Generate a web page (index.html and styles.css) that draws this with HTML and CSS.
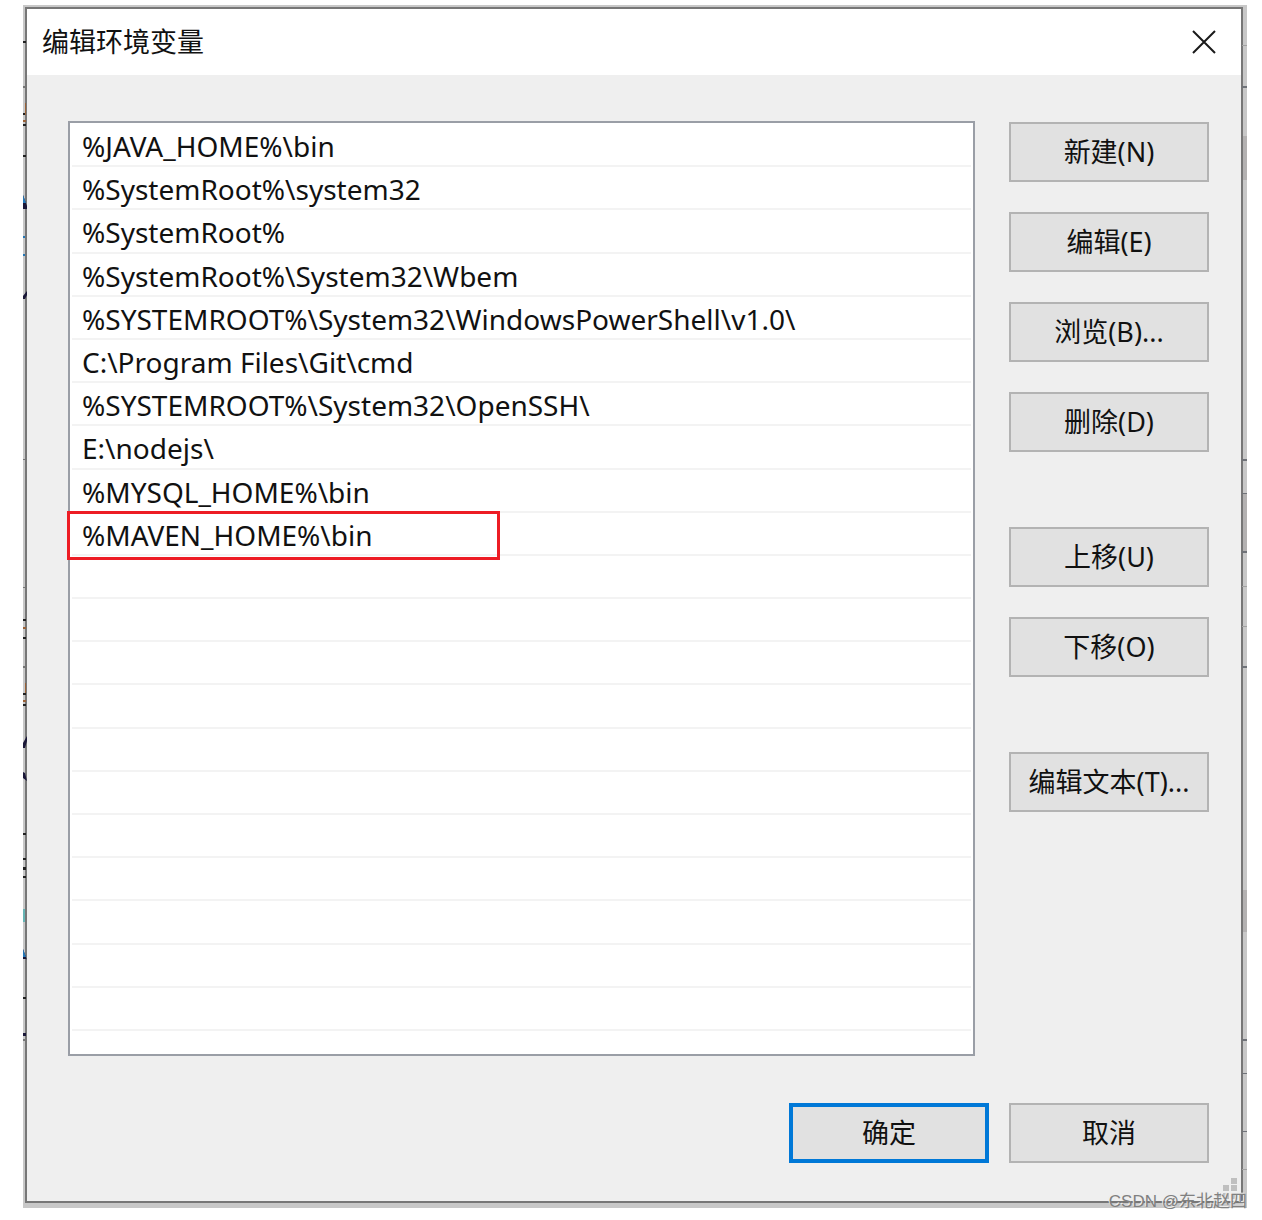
FILE: index.html
```html
<!DOCTYPE html>
<html lang="zh-CN">
<head>
<meta charset="utf-8">
<meta name="viewport" content="width=device-width, initial-scale=1">
<title>编辑环境变量</title>
<link rel="stylesheet" href="styles.css">
</head>
<body>
<div class="backdrop">
  <main class="dialog" aria-labelledby="dialog-title">
    <header class="titlebar">
      <h1 class="title" id="dialog-title">编辑环境变量</h1>
      <button class="close" type="button" aria-label="关闭">
        <svg width="24" height="24" viewBox="0 0 24 24" fill="none" stroke="#1a1a1a" stroke-width="2" aria-hidden="true"><path d="M1 1 23 23M23 1 1 23"/></svg>
      </button>
    </header>
    <div class="content">
      <ul class="paths">
        <li>%JAVA_HOME%\bin</li>
        <li>%SystemRoot%\system32</li>
        <li>%SystemRoot%</li>
        <li>%SystemRoot%\System32\Wbem</li>
        <li>%SYSTEMROOT%\System32\WindowsPowerShell\v1.0\</li>
        <li>C:\Program Files\Git\cmd</li>
        <li>%SYSTEMROOT%\System32\OpenSSH\</li>
        <li>E:\nodejs\</li>
        <li>%MYSQL_HOME%\bin</li>
        <li class="marked">%MAVEN_HOME%\bin</li>
        <li></li><li></li><li></li><li></li><li></li><li></li>
        <li></li><li></li><li></li><li></li><li></li>
      </ul>
      <div class="actions">
        <div class="group">
          <button class="btn" type="button">新建(N)</button>
          <button class="btn" type="button">编辑(E)</button>
          <button class="btn" type="button">浏览(B)...</button>
          <button class="btn" type="button">删除(D)</button>
        </div>
        <div class="group">
          <button class="btn" type="button">上移(U)</button>
          <button class="btn" type="button">下移(O)</button>
        </div>
        <div class="group">
          <button class="btn" type="button">编辑文本(T)...</button>
        </div>
      </div>
    </div>
    <footer class="footer">
      <button class="btn primary" type="button">确定</button>
      <button class="btn" type="button">取消</button>
    </footer>
    <svg class="grip" width="21" height="21" viewBox="0 0 21 21" fill="#bfbfbf" aria-hidden="true"><path d="M15 0h6v6h-6zM7 7h6v6H7zM15 7h6v6h-6zM0 15h5v6H0zM7 15h6v6H7zM15 15h6v6h-6z"/></svg>
  </main>
  <svg class="edge left" width="4" height="1203" viewBox="0 0 4 1203" aria-hidden="true">
    <g fill="#222"><path d="M0 36h3v2H0zM0 108h3v2H0zM0 119h3v2H0zM0 150h3v2H0zM0 614h3v2H0zM0 632h3v2H0zM0 688h3v2H0zM0 699h3v2H0zM0 828h3v2H0zM0 853h3v2H0zM0 862h3v3H0zM0 871h3v2H0zM0 992h3v2H0z"/></g>
    <g fill="#777"><path d="M0 81h3v2H0zM0 454h3v1H0zM0 582h3v1H0zM0 661h3v2H0zM0 1034h3v2H0z"/></g>
    <g fill="#9a6238"><path d="M2 98h1v12H2zM0 115h3v2H0zM0 622h3v2H0zM2 678h1v10H2zM0 695h3v2H0z"/></g>
    <g fill="#1a1738"><path d="M0 190l4 11v3H0zM0 291l4-5v4l-2 4H0zM0 738l4-7v5l-2 7H0zM0 767l2 1 2 8-4-3zM0 944l4 11v-1H0zM0 1028h3v3H0z"/></g>
    <g fill="#2478b8"><path d="M0 190l3 8H0zM0 231h2v2H0zM0 249h2v2H0zM0 944l3 8H0z"/></g>
    <path d="M0 904h2v13H0z" fill="#67b5b5"/>
  </svg>
  <svg class="edge right" width="5" height="1203" viewBox="0 0 5 1203" aria-hidden="true">
    <path d="M1 131h4v44H1zM1 488h4v58H1zM1 885h4v42H1z" fill="#b4b2b2"/>
    <path d="M0 40h5v1H0zM0 581h5v1H0zM0 621h5v1H0zM0 1164h5v1H0z" fill="#a2a2a2"/>
    <path d="M0 81h5v2H0zM0 454h5v2H0zM0 488h5v1H0zM0 546h5v2H0zM0 661h5v2H0zM0 1034h5v2H0zM0 1068h5v1H0zM0 1126h5v1H0z" fill="#6f7278"/>
  </svg>
  <span class="watermark">CSDN @东北赵四</span>
</div>
</body>
</html>
```
FILE: styles.css
```css
* {
  box-sizing: border-box;
}

body {
  margin: 0;
  min-height: 100vh;
  padding: 5px 15px 12px 23px;
  display: flex;
  background: #fff;
  color: #111;
  font: 28px/36px "Noto Sans", "Noto Sans CJK SC", sans-serif;
}

.backdrop {
  position: relative;
  flex: 1;
  display: flex;
  padding: 2px 4px 5px 2px;
  background: #c8c8c8;
}

.dialog {
  position: relative;
  flex: 1;
  display: flex;
  flex-direction: column;
  border: 2px solid #777;
  background: #efefef;
}

.titlebar {
  display: flex;
  align-items: center;
  justify-content: space-between;
  height: 66px;
  padding: 0 25px 0 15px;
  background: #fff;
}

.title {
  margin: 0;
  font-size: 27px;
  font-weight: 400;
}

.close {
  display: flex;
  padding: 0;
  border: 0;
  background: none;
}

.content {
  flex: 1;
  display: grid;
  grid-template-columns: 1fr 200px;
  gap: 34px;
  padding: 46px 32px 47px 41px;
}

.paths {
  display: grid;
  grid-auto-rows: 1fr;
  margin: 0;
  padding: 1px 2px 23px;
  border: 2px solid #9a9ea6;
  background: #fff;
  list-style: none;
}

.paths li {
  padding: 4px 10px 0;
  border-bottom: 2px solid #f3f3f3;
}

.marked {
  position: relative;
}

.marked::after {
  content: "";
  position: absolute;
  inset: -2px auto -6px -5px;
  width: 427px;
  border: 3px solid #ed1c24;
}

.actions {
  display: flex;
  flex-direction: column;
  gap: 75px;
  padding-top: 1px;
}

.group {
  display: flex;
  flex-direction: column;
  gap: 30px;
}

.btn {
  width: 200px;
  height: 60px;
  padding: 0;
  border: 2px solid #b3b3b3;
  background: #e1e1e1;
  color: inherit;
  font: inherit;
  font-size: 27px;
}

.primary {
  border: 4px solid #0078d7;
}

.footer {
  display: flex;
  justify-content: flex-end;
  gap: 20px;
  padding: 0 32px 38px;
}

.grip {
  position: absolute;
  right: 4px;
  bottom: 2px;
}

.edge {
  position: absolute;
  top: 0;
}

.left {
  left: 0;
}

.right {
  right: 0;
}

.watermark {
  position: absolute;
  right: 0;
  bottom: -6px;
  color: #808080;
  font-family: "Liberation Sans", "Noto Sans CJK SC", sans-serif;
  font-size: 17px;
  line-height: 24px;
  white-space: nowrap;
  text-shadow: -1px -1px 0 #eee;
}
```
